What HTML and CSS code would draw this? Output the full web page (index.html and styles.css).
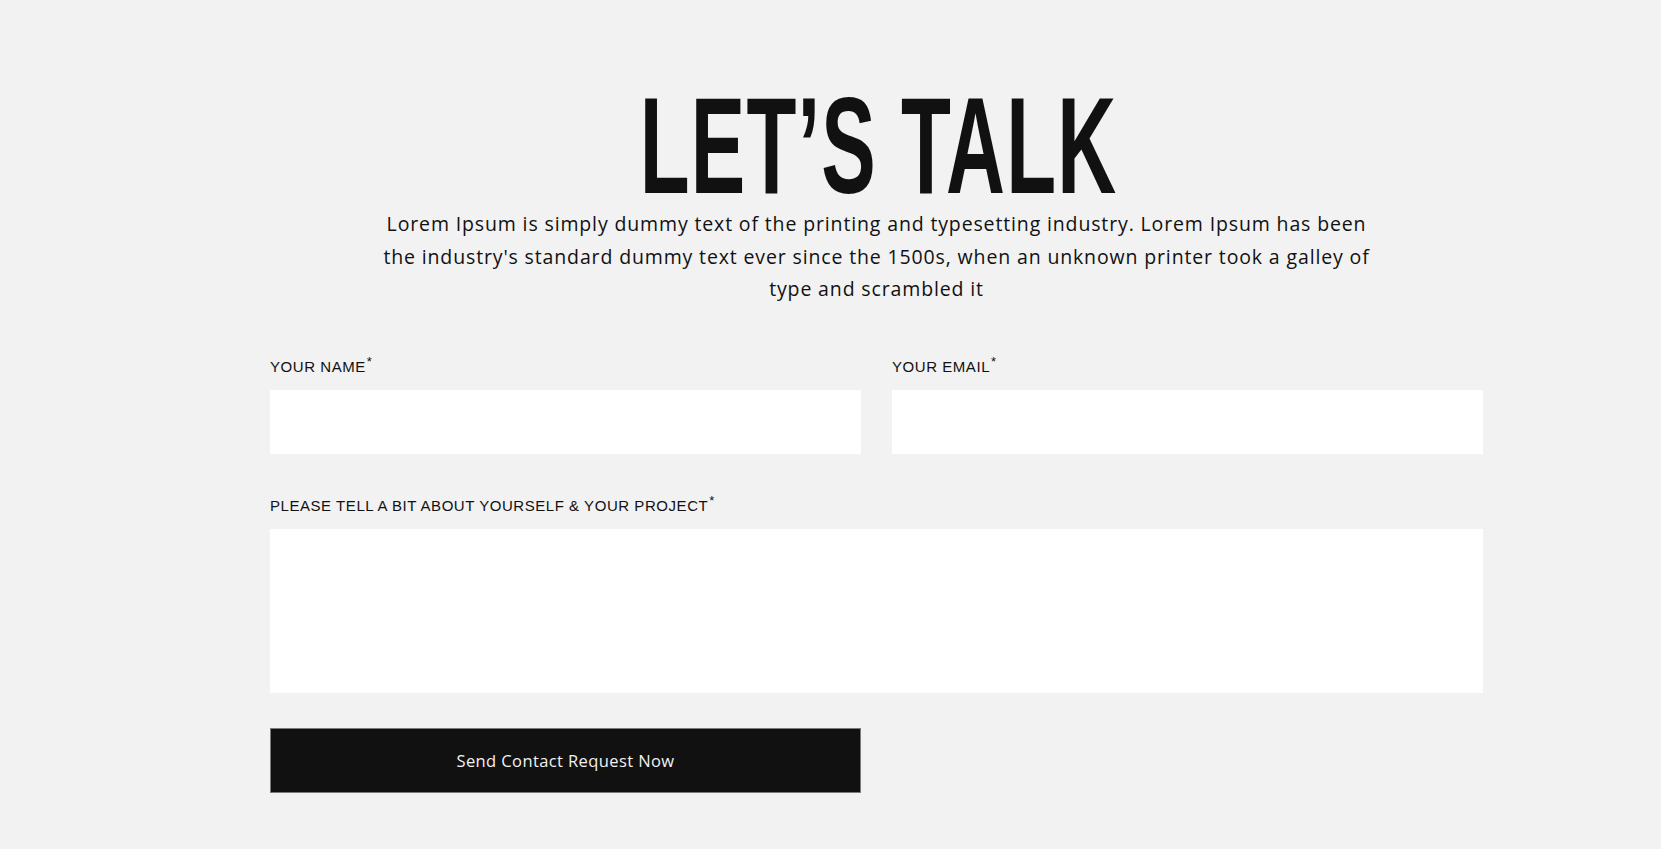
FILE: index.html
```html
<!DOCTYPE html>
<html lang="en">
<head>
<meta charset="utf-8">
<title>Let's Talk</title>
<link rel="stylesheet" href="styles.css">
</head>
<body>
<main class="page">
  <section class="contact">
    <h1 class="title"><span class="title-text">LET’S TALK</span></h1>
    <p class="intro">Lorem Ipsum is simply dummy text of the printing and typesetting industry. Lorem Ipsum has been the industry's standard dummy text ever since the 1500s, when an unknown printer took a galley of type and scrambled it</p>
    <form class="form">
      <div class="row">
        <div class="field">
          <label class="label" for="name">YOUR NAME<span class="req">*</span></label>
          <input class="input" id="name" type="text">
        </div>
        <div class="field">
          <label class="label" for="email">YOUR EMAIL<span class="req">*</span></label>
          <input class="input" id="email" type="email">
        </div>
      </div>
      <div class="field field-full">
        <label class="label" for="msg">PLEASE TELL A BIT ABOUT YOURSELF &amp; YOUR PROJECT<span class="req">*</span></label>
        <textarea class="textarea" id="msg"></textarea>
      </div>
      <div class="row">
        <button class="btn" type="button">Send Contact Request Now</button>
        <div></div>
      </div>
    </form>
  </section>
</main>
</body>
</html>
```
FILE: styles.css
```css
* { box-sizing: border-box; }
html, body {
  margin: 0;
  padding: 0;
  background: #f2f2f2;
}
body {
  color: #111;
  font-family: "Open Sans", "Liberation Sans", sans-serif;
}
.page {
  padding-left: 92px;
  min-height: 849px;
}
.contact {
  width: 1213px;
  margin: 0 auto;
  padding-top: 82px;
}
.title {
  margin: 0;
  padding-left: 4px;
  text-align: center;
  font-family: "Liberation Sans", sans-serif;
  font-weight: 700;
  font-size: 138px;
  line-height: 126px;
  color: #111;
}
.title-text {
  display: inline-block;
  transform: scaleX(0.592);
  transform-origin: center;
  letter-spacing: 2px;
}
.intro {
  width: 996px;
  margin: 0 auto;
  text-align: center;
  font-size: 19.5px;
  line-height: 32.5px;
  letter-spacing: 0.86px;
  color: #111;
}
.form {
  margin-top: 51px;
  display: flex;
  flex-direction: column;
  gap: 42px;
}
.row {
  display: grid;
  grid-template-columns: 1fr 1fr;
  column-gap: 31px;
}
.field {
  display: flex;
  flex-direction: column;
  gap: 13px;
}
.label {
  font-family: "Liberation Sans", sans-serif;
  font-size: 15px;
  line-height: 20px;
  color: #111;
  letter-spacing: 0.55px;
}
.req {
  font-size: 13px;
  vertical-align: super;
  line-height: 0;
  margin-left: 1px;
}
.input {
  display: block;
  width: 100%;
  height: 64px;
  border: 0;
  background: #fff;
  margin: 0;
  padding: 0 16px;
  font: inherit;
}
.textarea {
  display: block;
  width: 100%;
  height: 164px;
  border: 0;
  background: #fff;
  margin: 0;
  padding: 16px;
  resize: none;
  font: inherit;
}
.btn {
  margin-top: -7px;
  height: 65px;
  background: #111;
  border: 1px solid #7a7a7a;
  color: #f2f2f2;
  font-family: "Open Sans", "Liberation Sans", sans-serif;
  font-size: 16.5px;
  letter-spacing: 0.4px;
  cursor: pointer;
}
```
